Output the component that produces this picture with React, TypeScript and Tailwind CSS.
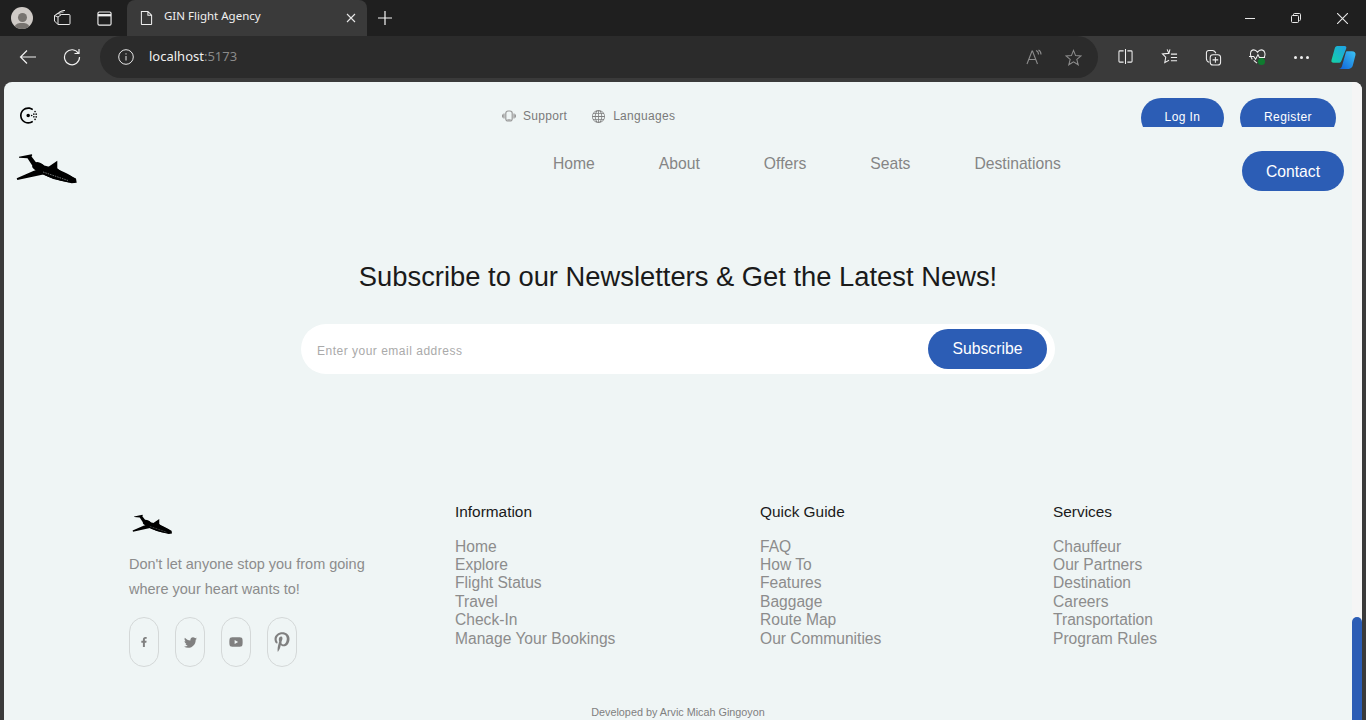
import { useState } from "react";
import { BsGlobe } from "react-icons/bs";
import { FaFacebookF, FaPinterestP, FaTwitter, FaYoutube } from "react-icons/fa";
import { SiConsul } from "react-icons/si";

const sans = { fontFamily: '"Liberation Sans", Arial, sans-serif' };

const columns = [
  { title: "Information", width: "w-[305px]", links: ["Home", "Explore", "Flight Status", "Travel", "Check-In", "Manage Your Bookings"] },
  { title: "Quick Guide", width: "w-[293px]", links: ["FAQ", "How To", "Features", "Baggage", "Route Map", "Our Communities"] },
  { title: "Services", width: "w-[200px]", links: ["Chauffeur", "Our Partners", "Destination", "Careers", "Transportation", "Program Rules"] },
];

function Plane({ className }: { className: string }) {
  return (
    <svg viewBox="0 0 62 32" className={className} fill="#000">
      <path d="M3 3.700 15.700 1.300 16.300 2 15.500 3.500 20.500 10 25.700 11 30.700 15 41.300 7.700 41.300 15.300 45.700 18.700 60 25.500 60.700 29.700 55.700 30.300 37.300 26 27.300 21.500 1.300 27 .7 25.300 17.300 18 22.300 16.300 17 13.700 11.500 5.300 3 4.700Z" />
      <ellipse cx="38" cy="20.500" rx="23" ry="5" transform="rotate(19 38 20.500)" />
      <ellipse cx="23" cy="12.500" rx="5.500" ry="3" transform="rotate(20 23 12.500)" />
      <path d="M27 19 38 22.700 52 27.500" stroke="#8a8f8f" strokeWidth=".8" strokeDasharray="1.500 1" fill="none" />
    </svg>
  );
}

function TabStrip() {
  return (
    <div className="flex h-9 items-end bg-[#1f1f1f]">
      <div className="flex h-9 w-[127px] items-center">
        <div className="ml-[11px] flex h-[22px] w-[22px] flex-col items-center justify-end overflow-hidden rounded-full bg-[#cfcac6]">
          <div className="h-[9px] w-[9px] rounded-full bg-[#77736f]" />
          <div className="mt-[1px] h-[6px] w-[16px] rounded-t-full bg-[#77736f]" />
        </div>
        <svg viewBox="0 0 18 18" className="ml-[20px] h-[18px] w-[18px]" fill="none" stroke="#e8e8e8" strokeWidth="1">
          <path d="M6 3.500 9.500 1.500H12M3.500 5 7 3h3.500M1.500 6.500 5 4.500l3.500 1M1.500 6.500v5.500l3.500 3.500V8zM5 15.500h11a1 1 0 0 0 1-1V6.500a1 1 0 0 0-1-1H8.500M5 8 8.500 5.500" />
        </svg>
        <svg viewBox="0 0 16 16" className="ml-[26px] h-[15px] w-[15px]" fill="none" stroke="#f0f0f0" strokeWidth="1.200">
          <rect x="1" y="1" width="14" height="14" rx="1.500" />
          <path d="M1 4.500h14" strokeWidth="2.500" />
        </svg>
      </div>
      <div className="flex h-9 w-[240px] items-center rounded-t-lg bg-[#3a3a3a]">
        <svg viewBox="0 0 14 16" className="ml-[13px] h-[16px] w-[13px]" fill="none" stroke="#f0f0f0" strokeWidth="1.100">
          <path d="M1.500 1h7l4 4v9.500a.5.5 0 0 1-.5.5H2a.5.5 0 0 1-.5-.5zM8.500 1v4h4" />
        </svg>
        <span className="ml-[11px] pb-[5px] text-[11.500px] text-[#f0f0f0]" style={{ fontFamily: '"Noto Sans", sans-serif' }}>GIN Flight Agency</span>
        <svg viewBox="0 0 10 10" className="ml-auto mr-[11px] h-[10px] w-[10px]" stroke="#e8e8e8" strokeWidth="1.100">
          <path d="M1 1l8 8M9 1l-8 8" />
        </svg>
      </div>
      <div className="flex h-9 items-center">
        <svg viewBox="0 0 14 14" className="ml-[11px] h-[14px] w-[14px]" stroke="#f5f5f5" strokeWidth="1.200">
          <path d="M7 0v14M0 7h14" />
        </svg>
      </div>
      <div className="ml-auto flex h-9 items-center">
        <svg viewBox="0 0 10 10" className="h-[10px] w-[10px]" stroke="#e8e8e8"><path d="M0 5.500h10" /></svg>
        <svg viewBox="0 0 10 10" className="ml-[36px] h-[10px] w-[10px]" fill="none" stroke="#e8e8e8">
          <rect x=".5" y="2.500" width="7" height="7" rx="1" /><path d="M2.500 2.500V1.500a1 1 0 0 1 1-1h5a1 1 0 0 1 1 1v5a1 1 0 0 1-1 1" />
        </svg>
        <svg viewBox="0 0 10 10" className="ml-[36px] mr-[18px] h-[11px] w-[11px]" stroke="#e8e8e8"><path d="M0 0l10 10M10 0L0 10" /></svg>
      </div>
    </div>
  );
}

function Toolbar() {
  return (
    <div className="flex h-[46px] items-start bg-[#3a3a3a]">
      <svg viewBox="0 0 18 16" className="ml-[19px] mt-[13px] h-[16px] w-[18px]" fill="none" stroke="#f0f0f0" strokeWidth="1.200">
        <path d="M17 8H1.500M8 1.500 1.500 8 8 14.500" />
      </svg>
      <svg viewBox="0 0 18 18" className="ml-[26px] mt-[12px] h-[18px] w-[18px]" fill="none" stroke="#f0f0f0" strokeWidth="1.200">
        <path d="M15.500 5.500A7.500 7.500 0 1 0 16.500 9M16 1v4.500h-4.500" />
      </svg>
      <div className="ml-[19px] flex h-[42px] w-[998px] items-center rounded-full bg-[#2b2b2b]">
        <svg viewBox="0 0 16 16" className="ml-[18px] h-[16px] w-[16px]" fill="none" stroke="#e8e8e8" strokeWidth="1">
          <circle cx="8" cy="8" r="7.300" /><path d="M8 7v4.500M8 4.300v1.200" />
        </svg>
        <span className="ml-[15px] text-[13px] text-[#f0f0f0]" style={{ fontFamily: '"Noto Sans", sans-serif' }}>
          localhost<span className="text-[#8a8a8a]">:5173</span>
        </span>
        <svg viewBox="0 0 16 16" className="ml-auto h-[16px] w-[16px]" fill="none" stroke="#8d8d8d" strokeWidth="1.100">
          <path d="M1 15 6 2h.500l5 13M2.800 10.500h7M10 1.500c1.500.5 2.500 2 2.500 4M12.500 1c1.500.8 2.500 2.500 2.500 4.500" />
        </svg>
        <svg viewBox="0 0 18 18" className="ml-[23px] mr-[16px] h-[17px] w-[17px]" fill="none" stroke="#8d8d8d" strokeWidth="1.100">
          <path d="M9 1.500 11.200 7l5.800.300-4.500 3.700 1.500 5.700L9 13.500l-5 3.200 1.500-5.700L1 7.300 6.800 7z" />
        </svg>
      </div>
      <svg viewBox="0 0 16 16" className="ml-[20px] mt-[13px] h-[15px] w-[15px]" fill="none" stroke="#f0f0f0" strokeWidth="1.100">
        <path d="M6 2H2a1 1 0 0 0-1 1v10a1 1 0 0 0 1 1h4M10 2h4a1 1 0 0 1 1 1v10a1 1 0 0 1-1 1h-4M8 0v16" />
      </svg>
      <svg viewBox="0 0 18 18" className="ml-[28px] mt-[12px] h-[17px] w-[17px]" fill="none" stroke="#f0f0f0" strokeWidth="1.100">
        <path d="M6.500 1.500 8.300 5.700h-.3L1.500 6.300l3.500 3.500-1 5.700 4.500-2.500M9.500 1.500 8.300 5.700M10.500 6.500H17M10.500 10H17M10.500 13.500H17" />
      </svg>
      <svg viewBox="0 0 18 18" className="ml-[27px] mt-[13px] h-[17px] w-[17px]" fill="none" stroke="#f0f0f0" strokeWidth="1.100">
        <path d="M4.500 14C2.500 13.500 1.500 12 1.500 10V4a2.500 2.500 0 0 1 2.500-2.500h4c1.500 0 2.500.5 3.500 3" /><rect x="5.500" y="6" width="11" height="11" rx="3" /><path d="M11 8.500v6M8 11.500h6" />
      </svg>
      <div className="relative ml-[27px] mt-[12px] h-[18px] w-[17px]">
        <svg viewBox="0 0 18 18" className="h-[17px] w-[17px]" fill="none" stroke="#f0f0f0" strokeWidth="1.100">
          <path d="M3.500 12C.5 8 1 2 5 2c2 0 3 1 4 2.500C10 3 11 2 13 2c3.500 0 5 4.500 3 8M8.500 16 5 13M0 9h5l2 3 2.500-5 1.500 3h6" />
        </svg>
        <div className="absolute left-[9px] top-[10px] h-[7px] w-[7px] rounded-full bg-[#0f7b2f]" />
      </div>
      <div className="ml-[28px] mt-[20px] flex gap-[3px]">
        <div className="h-[3px] w-[3px] rounded-full bg-[#f0f0f0]" />
        <div className="h-[3px] w-[3px] rounded-full bg-[#f0f0f0]" />
        <div className="h-[3px] w-[3px] rounded-full bg-[#f0f0f0]" />
      </div>
      <svg viewBox="0 0 24 24" className="ml-[22px] mt-[9px] h-[25px] w-[25px]">
        <defs>
          <linearGradient id="copA" x1="0" y1="1" x2="1" y2="0"><stop offset="0" stopColor="#14d3a4" /><stop offset="1" stopColor="#1f9fe8" /></linearGradient>
          <linearGradient id="copB" x1="1" y1="0" x2="0" y2="1"><stop offset="0" stopColor="#3cc3f2" /><stop offset="1" stopColor="#0d5fd8" /></linearGradient>
        </defs>
        <path d="M6 1h7c1.500 0 2.200 1 1.500 2.500L10 15c-.6 1.500-1.500 2-3 2H2.500C.8 17 0 16 .5 14.300L3.500 3.500C4 1.800 4.700 1 6 1z" fill="url(#copA)" />
        <path d="M15 6h5c2.500 0 4 1.500 3.500 3.500l-2.500 10c-.5 2-2 3.500-4 3.500H7c2 0 3-1 3.500-2.500L14 8c.2-1 .5-2 1-2z" fill="url(#copB)" />
      </svg>
    </div>
  );
}

function Header() {
  return (
    <header>
      <div className="flex h-[45px] overflow-hidden">
        <div className="ml-[16px] mt-[25px] text-[17px] leading-none text-black"><SiConsul /></div>
        <div className="ml-[465px] mt-[27px] flex h-[14px] items-center text-[12px] tracking-[.3px] text-[#7a7a7a]">
          <svg viewBox="0 0 14 14" className="mr-[7px] h-[14px] w-[14px]" fill="none" stroke="#9a9a9a" strokeWidth="1.200">
            <rect x="3.800" y="2" width="6.400" height="10" rx="2.200" />
            <path d="M5.500 10.500c1 .8 2 .8 3 0M2 4.500v5M12 4.500v5M.6 5.500v3M13.400 5.500v3" />
          </svg>
          <span>Support</span>
          <BsGlobe className="ml-[25px] mr-[8px] text-[13px] text-[#808080]" />
          <span>Languages</span>
        </div>
        <div className="ml-auto mr-[16px] flex gap-[16px]">
          <button className="mt-[16px] h-[40px] w-[83px] shrink-0 rounded-full bg-[#2c5db5] pb-[3px] text-[12px] tracking-[.4px] text-white">Log In</button>
          <button className="mt-[16px] h-[40px] w-[96px] shrink-0 rounded-full bg-[#2c5db5] pb-[3px] text-[12px] tracking-[.4px] text-white">Register</button>
        </div>
      </div>
      <div className="flex h-[64px]">
        <Plane className="ml-[12px] mt-[26px] h-[32px] w-[62px]" />
        <nav className="ml-[475px] mt-[28px] flex h-[18px] gap-[64px] text-[15.700px] leading-[18px] text-[#858585]">
          <span>Home</span>
          <span>About</span>
          <span>Offers</span>
          <span>Seats</span>
          <span>Destinations</span>
        </nav>
        <button className="ml-auto mr-[8px] mt-[24px] h-[40px] w-[102px] rounded-full bg-[#2c5db5] pt-[1px] text-[15.700px] text-white">Contact</button>
      </div>
    </header>
  );
}

export default function App() {
  const [email, setEmail] = useState("");

  return (
    <div className="flex h-screen flex-col overflow-hidden bg-[#3a3a3a]" style={sans}>
      <TabStrip />
      <Toolbar />
      <div className="mx-[4px] flex min-h-0 flex-1 overflow-hidden rounded-t-lg bg-[#eff5f5]">
        <main className="min-w-0 flex-1">
          <Header />
          <section className="mt-[69px] flex flex-col items-center">
            <h2 className="text-[27.350px] leading-[34px] text-[#1a1a1a]">Subscribe to our Newsletters &amp; Get the Latest News!</h2>
            <div className="mt-[30px] flex h-[50px] w-[754px] items-center rounded-full bg-white pl-[16px] pr-[8px]">
              <input
                value={email}
                onChange={(e) => setEmail(e.target.value)}
                placeholder="Enter your email address"
                className="min-w-0 flex-1 bg-transparent pt-[3px] text-[12px] tracking-[.5px] outline-none placeholder:text-[#aaaaaa]"
              />
              <button className="h-[40px] w-[119px] rounded-full bg-[#2c5db5] text-[15.700px] text-white">Subscribe</button>
            </div>
          </section>
          <footer className="ml-[125px] mt-[129px] flex">
            <div className="w-[326px]">
              <Plane className="ml-[2px] mt-[11px] h-[21px] w-[43px]" />
              <p className="mt-[17px] w-[250px] text-[14.500px] leading-[25px] text-[#8c8c8c]">
                Don't let anyone stop you from going where your heart wants to!
              </p>
              <div className="mt-[15px] flex gap-[16px] text-[#808080]">
                <a className="flex h-[50px] w-[30px] items-center justify-center rounded-full border border-[#d4d8d8] text-[10px]"><FaFacebookF /></a>
                <a className="flex h-[50px] w-[30px] items-center justify-center rounded-full border border-[#d4d8d8] text-[13px]"><FaTwitter /></a>
                <a className="flex h-[50px] w-[30px] items-center justify-center rounded-full border border-[#d4d8d8] text-[14px]"><FaYoutube /></a>
                <a className="flex h-[50px] w-[30px] items-center justify-center rounded-full border border-[#d4d8d8] text-[20px]"><FaPinterestP /></a>
              </div>
            </div>
            {columns.map((col) => (
              <div key={col.title} className={col.width}>
                <h3 className="text-[15.400px] leading-[18px] text-[#1a1a1a]">{col.title}</h3>
                <ul className="mt-[16.500px] text-[15.600px] leading-[18.400px] text-[#8c8c8c]">
                  {col.links.map((link) => (
                    <li key={link}>{link}</li>
                  ))}
                </ul>
              </div>
            ))}
          </footer>
          <p className="mt-[37px] text-center text-[10.800px] text-[#808080]">Developed by Arvic Micah Gingoyon</p>
        </main>
        <div className="flex w-[10px] shrink-0 flex-col justify-end bg-[#f5f5f5]">
          <div className="h-[103px] rounded-t-full bg-[#2c5db5]" />
        </div>
      </div>
    </div>
  );
}
